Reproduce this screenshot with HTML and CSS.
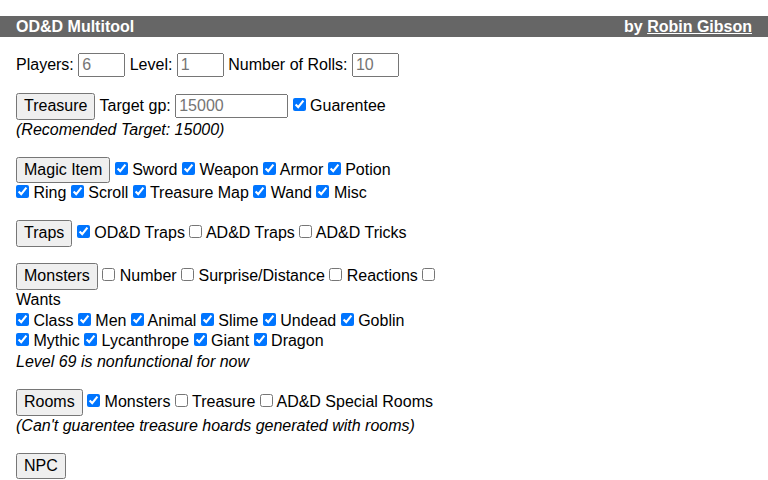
FILE: index.html
```html
<!DOCTYPE html>
<html>
<head>
<meta charset="utf-8">
<title>OD&amp;D Multitool</title>
<link rel="stylesheet" href="styles.css">
</head>
<body>
<header class="topbar">
  <span class="title">OD&amp;D Multitool</span>
  <span class="byline">by <a href="#">Robin Gibson</a></span>
</header>
<main class="content">
  <p>Players: <input class="w-small" type="text" placeholder="6"> Level: <input class="w-small" type="text" placeholder="1"> Number of Rolls: <input class="w-small" type="text" placeholder="10"></p>

  <p><button>Treasure</button> Target gp: <input class="w-gp" type="text" placeholder="15000"> <label><input type="checkbox" checked> Guarentee</label><br>
  <i>(Recomended Target: 15000)</i></p>

  <p><button>Magic Item</button> <label><input type="checkbox" checked> Sword</label> <label><input type="checkbox" checked> Weapon</label> <label><input type="checkbox" checked> Armor</label> <label><input type="checkbox" checked> Potion</label><br>
  <label><input type="checkbox" checked> Ring</label> <label><input type="checkbox" checked> Scroll</label> <label><input type="checkbox" checked> Treasure Map</label> <label><input type="checkbox" checked> Wand</label> <label><input type="checkbox" checked> Misc</label></p>

  <p><button>Traps</button> <label><input type="checkbox" checked> OD&amp;D Traps</label> <label><input type="checkbox"> AD&amp;D Traps</label> <label><input type="checkbox"> AD&amp;D Tricks</label></p>

  <p><button>Monsters</button> <label><input type="checkbox"> Number</label> <label><input type="checkbox"> Surprise/Distance</label> <label><input type="checkbox"> Reactions</label> <label><input type="checkbox"> Wants</label><br>
  <label><input type="checkbox" checked> Class</label> <label><input type="checkbox" checked> Men</label> <label><input type="checkbox" checked> Animal</label> <label><input type="checkbox" checked> Slime</label> <label><input type="checkbox" checked> Undead</label> <label><input type="checkbox" checked> Goblin</label><br>
  <label><input type="checkbox" checked> Mythic</label> <label><input type="checkbox" checked> Lycanthrope</label> <label><input type="checkbox" checked> Giant</label> <label><input type="checkbox" checked> Dragon</label><br>
  <i>Level 69 is nonfunctional for now</i></p>

  <p><button>Rooms</button> <label><input type="checkbox" checked> Monsters</label> <label><input type="checkbox"> Treasure</label> <label><input type="checkbox"> AD&amp;D Special Rooms</label><br>
  <i>(Can't guarentee treasure hoards generated with rooms)</i></p>

  <p><button>NPC</button></p>
</main>
</body>
</html>
```

FILE: styles.css
```css
html, body {
  margin: 0;
  padding: 0;
  background: #fff;
}

body {
  font-family: "Liberation Sans", Arial, sans-serif;
  font-size: 16px;
  line-height: 1.3;
  color: #000;
}

.topbar {
  margin-top: 16px;
  height: 21px;
  line-height: 21px;
  padding: 0 16px;
  background: #666;
  color: #fff;
  font-weight: bold;
  display: flex;
  justify-content: space-between;
}

.topbar a {
  color: #fff;
  text-decoration: underline;
}

.content {
  padding: 0 16px;
  max-width: 450px;
}

.content p {
  margin: 16px 0;
}

input, button {
  font-family: inherit;
  font-size: inherit;
}

button {
  line-height: inherit;
}

input {
  line-height: normal;
}

input[type="text"] {
  box-sizing: border-box;
}

input[type="checkbox"] {
  margin: 0;
}

.w-small { width: 47px; }
.w-gp { width: 113px; }
```
